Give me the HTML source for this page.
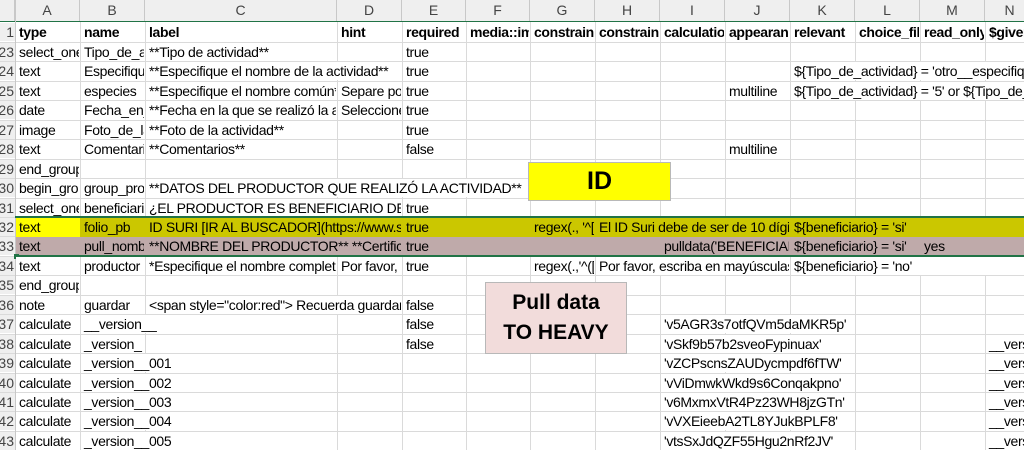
<!DOCTYPE html>
<html><head><meta charset="utf-8"><style>
*{margin:0;padding:0;box-sizing:border-box}
body{width:1024px;height:450px;overflow:hidden;background:#fff;position:relative;font-family:"Liberation Sans",Arial,sans-serif;font-size:14px;letter-spacing:-0.35px;color:#000}
.v{position:absolute;top:0;width:1px;height:450px;background:#dadada}
.h{position:absolute;left:0;height:1px;width:1024px;background:#dadada}
.c{position:absolute;height:18px;line-height:18px;padding-left:3px;white-space:nowrap;overflow:hidden;background:#fff}
.hd{position:absolute;top:0;height:21px;line-height:21px;text-align:center;color:#444;font-size:14px;letter-spacing:0;background:#efefef;border-right:1px solid #c8c8c8}
.rn{position:absolute;left:0;width:15px;height:18px;line-height:18px;text-align:right;overflow:hidden;color:#444;font-size:14px;letter-spacing:0;background:#efefef;white-space:nowrap;direction:rtl;padding-right:1px}
b{font-weight:bold}
</style></head><body>
<div class="v" style="left:80px"></div><div class="v" style="left:145px"></div><div class="v" style="left:337px"></div><div class="v" style="left:402px"></div><div class="v" style="left:466px"></div><div class="v" style="left:530px"></div><div class="v" style="left:595px"></div><div class="v" style="left:660px"></div><div class="v" style="left:725px"></div><div class="v" style="left:790px"></div><div class="v" style="left:855px"></div><div class="v" style="left:920px"></div><div class="v" style="left:985px"></div>
<div class="h" style="top:42px"></div><div class="h" style="top:61px"></div><div class="h" style="top:81px"></div><div class="h" style="top:100px"></div><div class="h" style="top:120px"></div><div class="h" style="top:139px"></div><div class="h" style="top:159px"></div><div class="h" style="top:178px"></div><div class="h" style="top:198px"></div><div class="h" style="top:217px"></div><div class="h" style="top:236px"></div><div class="h" style="top:256px"></div><div class="h" style="top:275px"></div><div class="h" style="top:295px"></div><div class="h" style="top:314px"></div><div class="h" style="top:334px"></div><div class="h" style="top:353px"></div><div class="h" style="top:373px"></div><div class="h" style="top:392px"></div><div class="h" style="top:411px"></div><div class="h" style="top:431px"></div>

<div class="hd" style="left:0;width:15px"></div>
<div class="hd" style="left:15px;width:65px">A</div><div class="hd" style="left:80px;width:65px">B</div><div class="hd" style="left:145px;width:192px">C</div><div class="hd" style="left:337px;width:65px">D</div><div class="hd" style="left:402px;width:64px">E</div><div class="hd" style="left:466px;width:64px">F</div><div class="hd" style="left:530px;width:65px">G</div><div class="hd" style="left:595px;width:65px">H</div><div class="hd" style="left:660px;width:65px">I</div><div class="hd" style="left:725px;width:65px">J</div><div class="hd" style="left:790px;width:65px">K</div><div class="hd" style="left:855px;width:65px">L</div><div class="hd" style="left:920px;width:65px">M</div><div class="hd" style="left:985px;width:50px">N</div>
<div style="position:absolute;left:0;top:21px;width:1024px;height:1px;background:#217346"></div>
<div style="position:absolute;left:15px;top:0;width:1px;height:450px;background:#c8c8c8"></div>

<div class="rn" style="top:23px">1</div><div class="rn" style="top:43px">23</div><div class="rn" style="top:62px">24</div><div class="rn" style="top:82px">25</div><div class="rn" style="top:101px">26</div><div class="rn" style="top:121px">27</div><div class="rn" style="top:140px">28</div><div class="rn" style="top:160px">29</div><div class="rn" style="top:179px">30</div><div class="rn" style="top:199px">31</div><div class="rn" style="top:218px">32</div><div class="rn" style="top:237px">33</div><div class="rn" style="top:257px">34</div><div class="rn" style="top:276px">35</div><div class="rn" style="top:296px">36</div><div class="rn" style="top:315px">37</div><div class="rn" style="top:335px">38</div><div class="rn" style="top:354px">39</div><div class="rn" style="top:374px">40</div><div class="rn" style="top:393px">41</div><div class="rn" style="top:412px">42</div><div class="rn" style="top:432px">43</div>

<div class="c" style="top:23px;left:16px;width:63px"><b>type</b></div><div class="c" style="top:23px;left:81px;width:63px"><b>name</b></div><div class="c" style="top:23px;left:146px;width:190px"><b>label</b></div><div class="c" style="top:23px;left:338px;width:63px"><b>hint</b></div><div class="c" style="top:23px;left:403px;width:62px"><b>required</b></div><div class="c" style="top:23px;left:467px;width:62px"><b>media::image</b></div><div class="c" style="top:23px;left:531px;width:63px"><b>constraint</b></div><div class="c" style="top:23px;left:596px;width:63px"><b>constraint_message</b></div><div class="c" style="top:23px;left:661px;width:63px"><b>calculation</b></div><div class="c" style="top:23px;left:726px;width:63px"><b>appearance</b></div><div class="c" style="top:23px;left:791px;width:63px"><b>relevant</b></div><div class="c" style="top:23px;left:856px;width:63px"><b>choice_filter</b></div><div class="c" style="top:23px;left:921px;width:63px"><b>read_only</b></div><div class="c" style="top:23px;left:986px;width:40px"><b>$given_name</b></div>

<div class="c" style="top:43px;left:16px;width:63px">select_one</div><div class="c" style="top:43px;left:81px;width:63px">Tipo_de_actividad</div><div class="c" style="top:43px;left:146px;width:190px">**Tipo de actividad**</div><div class="c" style="top:43px;left:403px;width:62px">true</div>

<div class="c" style="top:62px;left:16px;width:63px">text</div><div class="c" style="top:62px;left:81px;width:63px">Especifique</div><div class="c" style="top:62px;left:146px;width:255px">**Especifique el nombre de la actividad**</div><div class="c" style="top:62px;left:403px;width:62px">true</div><div class="c" style="top:62px;left:791px;width:240px">${Tipo_de_actividad} = 'otro__especifique'</div>

<div class="c" style="top:82px;left:16px;width:63px">text</div><div class="c" style="top:82px;left:81px;width:63px">especies</div><div class="c" style="top:82px;left:146px;width:190px">**Especifique el nombre común**</div><div class="c" style="top:82px;left:338px;width:63px">Separe por comas</div><div class="c" style="top:82px;left:403px;width:62px">true</div><div class="c" style="top:82px;left:726px;width:63px">multiline</div><div class="c" style="top:82px;left:791px;width:240px">${Tipo_de_actividad} = '5' or ${Tipo_de_actividad}</div>

<div class="c" style="top:101px;left:16px;width:63px">date</div><div class="c" style="top:101px;left:81px;width:63px">Fecha_en_que</div><div class="c" style="top:101px;left:146px;width:190px">**Fecha en la que se realizó la actividad**</div><div class="c" style="top:101px;left:338px;width:63px">Seleccione la fecha</div><div class="c" style="top:101px;left:403px;width:62px">true</div>

<div class="c" style="top:121px;left:16px;width:63px">image</div><div class="c" style="top:121px;left:81px;width:63px">Foto_de_la</div><div class="c" style="top:121px;left:146px;width:190px">**Foto de la actividad**</div><div class="c" style="top:121px;left:403px;width:62px">true</div>

<div class="c" style="top:140px;left:16px;width:63px">text</div><div class="c" style="top:140px;left:81px;width:63px">Comentarios</div><div class="c" style="top:140px;left:146px;width:190px">**Comentarios**</div><div class="c" style="top:140px;left:403px;width:62px">false</div><div class="c" style="top:140px;left:726px;width:63px">multiline</div>

<div class="c" style="top:160px;left:16px;width:63px">end_group</div>

<div class="c" style="top:179px;left:16px;width:63px">begin_group</div><div class="c" style="top:179px;left:81px;width:63px">group_productor</div><div class="c" style="top:179px;left:146px;width:383px">**DATOS DEL PRODUCTOR QUE REALIZÓ LA ACTIVIDAD**</div>

<div class="c" style="top:199px;left:16px;width:63px">select_one</div><div class="c" style="top:199px;left:81px;width:63px">beneficiario</div><div class="c" style="top:199px;left:146px;width:255px">¿EL PRODUCTOR ES BENEFICIARIO DE PROGRAMA?</div><div class="c" style="top:199px;left:403px;width:62px">true</div>

<div style="position:absolute;top:218px;left:16px;width:1010px;height:19px;background:#cbc700"></div>
<div style="position:absolute;top:218px;left:16px;width:64px;height:19px;background:#ffff00"></div>
<div class="c" style="top:218px;left:16px;width:63px;background:transparent">text</div><div class="c" style="top:218px;left:81px;width:63px;background:transparent">folio_pb</div><div class="c" style="top:218px;left:146px;width:255px;background:transparent">ID SURI [IR AL BUSCADOR](https://www.suri.gob.mx)</div><div class="c" style="top:218px;left:403px;width:62px;background:transparent">true</div><div class="c" style="top:218px;left:531px;width:63px;background:transparent">regex(., '^[0-9]{10}$')</div><div class="c" style="top:218px;left:596px;width:193px;background:transparent">El ID Suri debe de ser de 10 dígitos</div><div class="c" style="top:218px;left:791px;width:200px;background:transparent">${beneficiario} = 'si'</div>

<div style="position:absolute;top:237px;left:16px;width:1010px;height:19px;background:#bfaaaa"></div>
<div class="c" style="top:237px;left:16px;width:63px;background:transparent">text</div><div class="c" style="top:237px;left:81px;width:63px;background:transparent">pull_nombre</div><div class="c" style="top:237px;left:146px;width:255px;background:transparent">**NOMBRE DEL PRODUCTOR** **Certificado**</div><div class="c" style="top:237px;left:403px;width:62px;background:transparent">true</div><div class="c" style="top:237px;left:661px;width:128px;background:transparent">pulldata('BENEFICIARIOS'</div><div class="c" style="top:237px;left:791px;width:128px;background:transparent">${beneficiario} = 'si'</div><div class="c" style="top:237px;left:921px;width:63px;background:transparent">yes</div>
<div style="position:absolute;top:216px;left:15px;width:1012px;height:2px;background:#217346"></div>
<div style="position:absolute;top:255px;left:15px;width:1012px;height:2px;background:#217346"></div>
<div style="position:absolute;top:254px;left:14px;width:5px;height:5px;background:#217346"></div>

<div class="c" style="top:257px;left:16px;width:63px">text</div><div class="c" style="top:257px;left:81px;width:63px">productor</div><div class="c" style="top:257px;left:146px;width:190px">*Especifique el nombre completo*</div><div class="c" style="top:257px;left:338px;width:63px">Por favor, escriba</div><div class="c" style="top:257px;left:403px;width:62px">true</div><div class="c" style="top:257px;left:531px;width:63px">regex(.,'^([A-Z]')</div><div class="c" style="top:257px;left:596px;width:193px">Por favor, escriba en mayúsculas</div><div class="c" style="top:257px;left:791px;width:200px">${beneficiario} = 'no'</div>

<div class="c" style="top:276px;left:16px;width:63px">end_group</div>

<div class="c" style="top:296px;left:16px;width:63px">note</div><div class="c" style="top:296px;left:81px;width:63px">guardar</div><div class="c" style="top:296px;left:146px;width:255px">&lt;span style="color:red"&gt; Recuerda guardar</div><div class="c" style="top:296px;left:403px;width:62px">false</div>

<div class="c" style="top:315px;left:16px;width:63px">calculate</div><div class="c" style="top:315px;left:81px;width:128px">__version__</div><div class="c" style="top:315px;left:403px;width:62px">false</div><div class="c" style="top:315px;left:661px;width:193px">'v5AGR3s7otfQVm5daMKR5p'</div>
<div class="c" style="top:335px;left:16px;width:63px">calculate</div><div class="c" style="top:335px;left:81px;width:63px">_version_</div><div class="c" style="top:335px;left:403px;width:62px">false</div><div class="c" style="top:335px;left:661px;width:193px">'vSkf9b57b2sveoFypinuax'</div><div class="c" style="top:335px;left:986px;width:40px">__version__</div>
<div class="c" style="top:354px;left:16px;width:63px">calculate</div><div class="c" style="top:354px;left:81px;width:128px">_version__001</div><div class="c" style="top:354px;left:661px;width:193px">'vZCPscnsZAUDycmpdf6fTW'</div><div class="c" style="top:354px;left:986px;width:40px">__version__</div>
<div class="c" style="top:374px;left:16px;width:63px">calculate</div><div class="c" style="top:374px;left:81px;width:128px">_version__002</div><div class="c" style="top:374px;left:661px;width:193px">'vViDmwkWkd9s6Conqakpno'</div><div class="c" style="top:374px;left:986px;width:40px">__version__</div>
<div class="c" style="top:393px;left:16px;width:63px">calculate</div><div class="c" style="top:393px;left:81px;width:128px">_version__003</div><div class="c" style="top:393px;left:661px;width:193px">'v6MxmxVtR4Pz23WH8jzGTn'</div><div class="c" style="top:393px;left:986px;width:40px">__version__</div>
<div class="c" style="top:412px;left:16px;width:63px">calculate</div><div class="c" style="top:412px;left:81px;width:128px">_version__004</div><div class="c" style="top:412px;left:661px;width:193px">'vVXEieebA2TL8YJukBPLF8'</div><div class="c" style="top:412px;left:986px;width:40px">__version__</div>
<div class="c" style="top:432px;left:16px;width:63px">calculate</div><div class="c" style="top:432px;left:81px;width:128px">_version__005</div><div class="c" style="top:432px;left:661px;width:193px">'vtsSxJdQZF55Hgu2nRf2JV'</div><div class="c" style="top:432px;left:986px;width:40px">__version__</div>

<div style="position:absolute;left:528px;top:162px;width:143px;height:39px;background:#ffff00;border:1px solid #b8b8b8;text-align:center;line-height:37px;font-weight:bold;font-size:25px;letter-spacing:0">ID</div>
<div style="position:absolute;left:485px;top:282px;width:142px;height:72px;background:#f2dcdb;border:1px solid #b8b8b8;text-align:center;padding-top:5px;line-height:30px;font-weight:bold;font-size:21px;letter-spacing:0">Pull data<br>TO HEAVY</div>
</body></html>
